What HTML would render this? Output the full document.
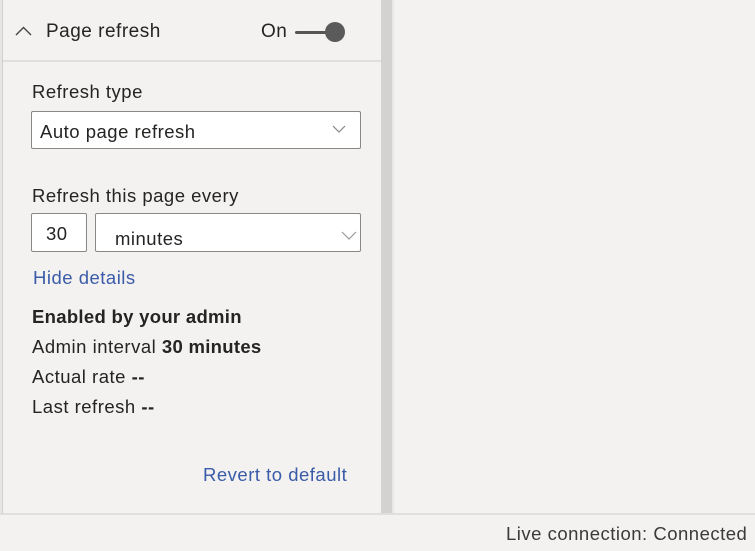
<!DOCTYPE html>
<html><head><style>
body{margin:0;width:755px;height:551px;background:#f3f2f1;font-family:"Liberation Sans",sans-serif;color:#252423;position:relative;overflow:hidden}
.a{position:absolute}
.t{font-size:18.5px;white-space:nowrap;letter-spacing:0.5px}
.box{background:#fff;border:1px solid #8a8886;border-radius:2px;box-sizing:border-box}
</style></head><body>
<div class="a" style="left:0;top:0;width:2px;height:513px;background:#e6e5e4"></div>
<div class="a" style="left:2px;top:0;width:1px;height:513px;background:#d2d0ce"></div>
<div class="a" style="left:3px;top:60px;width:378px;height:2px;background:#e1dfdd"></div>
<div class="a" style="left:381px;top:0;width:11px;height:513px;background:#d3d2d1"></div>
<div class="a" style="left:392px;top:0;width:2px;height:513px;background:#e8e7e6"></div>
<div class="a" style="left:0;top:513px;width:755px;height:2px;background:#e1dfdd"></div>
<svg class="a" style="left:14px;top:24px" width="20" height="14"><polyline points="2,11 9.5,3.5 17,11" fill="none" stroke="#444" stroke-width="1.4"/></svg>
<div class="a t" style="left:46px;top:21px;font-size:19px">Page refresh</div>
<div class="a t" style="left:261px;top:21px;font-size:19px">On</div>
<div class="a" style="left:295px;top:31px;width:34px;height:3px;background:#555;border-radius:2px"></div>
<div class="a" style="left:325px;top:22px;width:20px;height:20px;background:#5a5a5a;border-radius:50%"></div>
<div class="a t" style="left:32px;top:81px">Refresh type</div>
<div class="a box" style="left:31px;top:111px;width:330px;height:38px"></div>
<div class="a t" style="left:40px;top:121px">Auto page refresh</div>
<svg class="a" style="left:331px;top:124px" width="16" height="10"><polyline points="2,2 8,8 14,2" fill="none" stroke="#888" stroke-width="1.2"/></svg>
<div class="a t" style="left:32px;top:185px">Refresh this page every</div>
<div class="a box" style="left:31px;top:213px;width:56px;height:39px"></div>
<div class="a t" style="left:46px;top:223px">30</div>
<div class="a box" style="left:95px;top:213px;width:266px;height:39px"></div>
<div class="a t" style="left:115px;top:228px">minutes</div>
<svg class="a" style="left:340px;top:230px" width="18" height="12"><polyline points="2,2 9,9 16,2" fill="none" stroke="#999" stroke-width="1.2"/></svg>
<div class="a t" style="left:33px;top:267px;color:#3a5ba8">Hide details</div>
<div class="a t" style="left:32px;top:306px;font-weight:bold;letter-spacing:0.3px">Enabled by your admin</div>
<div class="a t" style="left:32px;top:336px">Admin interval <b style="letter-spacing:0.3px">30 minutes</b></div>
<div class="a t" style="left:32px;top:366px">Actual rate <b>--</b></div>
<div class="a t" style="left:32px;top:396px">Last refresh <b>--</b></div>
<div class="a t" style="left:203px;top:464px;color:#3a5ba8">Revert to default</div>
<div class="a t" style="left:506px;top:523px;color:#3b3a39">Live connection: Connected</div>
</body></html>
